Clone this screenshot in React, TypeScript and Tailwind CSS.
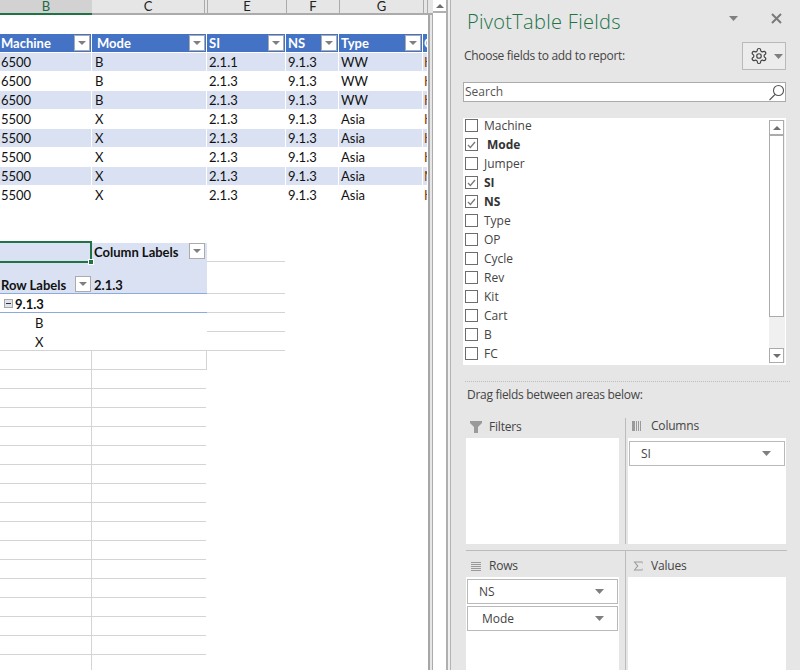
function Arrow({ className = "" }: { className?: string }) {
  return (
    <svg width="9" height="5" viewBox="0 0 9 5" className={className}>
      <path d="M0 0H9L4.5 5Z" fill="#7f7f7f" />
    </svg>
  );
}

function FilterBtn({ className = "" }: { className?: string }) {
  return (
    <div className={`w-[16px] h-[16px] bg-white border border-[#ababab] flex items-center justify-center shrink-0 ${className}`}>
      <svg width="8" height="4" viewBox="0 0 8 4"><path d="M0 0H8L4 4Z" fill="#7f7f7f" /></svg>
    </div>
  );
}

const colsW = [92, 115, 79, 53, 84, 5];
const headPad = [1, 5, 2, 2, 2, 1];
const dataPad = [1, 3, 2, 2, 2, 1];
const heads = ["Machine", "Mode", "SI", "NS", "Type", "C"];
const rows = [
  ["6500", "B", "2.1.1", "9.1.3", "WW", "K"],
  ["6500", "B", "2.1.3", "9.1.3", "WW", "K"],
  ["6500", "B", "2.1.3", "9.1.3", "WW", "K"],
  ["5500", "X", "2.1.3", "9.1.3", "Asia", "K"],
  ["5500", "X", "2.1.3", "9.1.3", "Asia", "K"],
  ["5500", "X", "2.1.3", "9.1.3", "Asia", "K"],
  ["5500", "X", "2.1.3", "9.1.3", "Asia", "M"],
  ["5500", "X", "2.1.3", "9.1.3", "Asia", "K"],
];

function ColHeaders() {
  const c = [
    ["B", 92, true],
    ["C", 113, false],
    ["", 3, false],
    ["E", 79, false],
    ["F", 53, false],
    ["G", 84, false],
    ["", 4, false],
  ] as const;
  return (
    <div className="h-[15px] flex bg-[#e6e6e6] shrink-0">
      {c.map(([l, w, sel], i) => (
        <div
          key={i}
          style={{ width: w }}
          className={`h-full flex items-center justify-center text-[13px] leading-none ${sel ? "bg-[#d2d2d2] text-[#1e6b41] border-b-2 border-[#217346]" : "text-[#222] border-r border-b-2 border-[#ababab]"}`}
        >
          {l}
        </div>
      ))}
      <div className="flex-1 border-b-2 border-[#ababab]" />
    </div>
  );
}

function DataTable() {
  return (
    <div className="mt-[19px]">
      <div className="flex h-[19px]">
        {heads.map((h, i) => (
          <div
            key={i}
            style={{ width: colsW[i], paddingLeft: headPad[i] }}
            className="h-[18px] bg-[#4472c4] text-white font-bold text-[13px] leading-[18px] border-r border-white flex items-center justify-between pr-[1px] overflow-hidden shrink-0"
          >
            <span>{h}</span>
            {i < 5 && <FilterBtn />}
          </div>
        ))}
      </div>
      {rows.map((r, ri) => (
        <div key={ri} className="flex h-[19px]">
          {r.map((c, i) => (
            <div
              key={i}
              style={{ width: colsW[i], paddingLeft: dataPad[i] }}
              className={`h-[18px] text-[13px] leading-[18px] border-r border-white overflow-hidden shrink-0 ${ri % 2 === 0 ? "bg-[#d9e1f2]" : "bg-white"} ${i === 5 ? "text-[#833c0b]" : "text-[#111]"}`}
            >
              {c}
            </div>
          ))}
        </div>
      ))}
    </div>
  );
}

function Pivot() {
  return (
    <div className="mt-[36px] text-[13px] text-[#111]">
      <div className="h-[21px] flex">
        <div className="w-[92px] h-[22px] bg-[#d9e1f2] border-2 border-l-0 border-[#217346] shrink-0 relative z-10">
          <div className="absolute right-[-4px] bottom-[-4px] w-[6px] h-[6px] bg-[#217346] border border-white" />
        </div>
        <div className="w-[115px] h-[19px] mt-[2px] bg-[#d9e1f2] flex items-start justify-between pl-[2px] pr-[2px] font-bold shrink-0">
          <span className="leading-[18px]">Column Labels</span>
          <FilterBtn />
        </div>
        <div className="w-[78px] h-[21px] border-b border-[#d4d4d4] shrink-0" />
      </div>
      <div className="h-[32px] flex">
        <div className="w-[92px] bg-[#d9e1f2] flex items-end justify-between pl-[1px] pr-[1px] font-bold border-b border-[#8ea9db] shrink-0">
          <span className="leading-[16px]">Row Labels</span>
          <FilterBtn className="mb-[1px]" />
        </div>
        <div className="w-[115px] bg-[#d9e1f2] flex items-end pl-[2px] font-bold border-b border-[#8ea9db] shrink-0">
          <span className="leading-[16px]">2.1.3</span>
        </div>
        <div className="w-[78px] border-b border-[#d4d4d4] shrink-0" />
      </div>
      <div className="h-[19px] flex">
        <div className="w-[207px] border-b border-[#8ea9db] flex items-center font-bold pl-[4px] shrink-0">
          <div className="w-[9px] h-[9px] bg-[#dfe3ee] border border-[#a6a6a6] flex items-center justify-center mr-[2px]">
            <div className="w-[5px] h-px bg-[#333]" />
          </div>
          <span className="leading-[18px] pt-[1px]">9.1.3</span>
        </div>
        <div className="w-[78px] border-b border-[#d4d4d4] shrink-0" />
      </div>
      <div className="h-[19px] flex">
        <div className="w-[207px] pl-[35px] leading-[20px] shrink-0">B</div>
        <div className="w-[78px] border-b border-[#d4d4d4] shrink-0" />
      </div>
      <div className="h-[19px] flex">
        <div className="w-[207px] pl-[35px] leading-[20px] border-b border-[#d4d4d4] shrink-0">X</div>
        <div className="w-[78px] border-b border-[#d4d4d4] shrink-0" />
      </div>
      {Array.from({ length: 17 }).map((_, i) => (
        <div key={i} className="h-[19px] flex">
          <div className="w-[92px] border-r border-b border-[#d4d4d4] shrink-0" />
          <div className="w-[114px] border-b border-[#d4d4d4] shrink-0" />
          {i === 0 && <div className="w-px bg-[#d4d4d4] shrink-0" />}
        </div>
      ))}
    </div>
  );
}

function Check({ on }: { on?: boolean }) {
  return (
    <div className="w-[13px] h-[13px] border border-[#6d6d6d] bg-white flex items-center justify-center shrink-0">
      {on && (
        <svg width="9" height="8" viewBox="0 0 9 8">
          <path d="M1 4L3.4 6.5L8 1" fill="none" stroke="#7a7a7a" strokeWidth="1.3" />
        </svg>
      )}
    </div>
  );
}

const fields: [string, boolean, string?][] = [
  ["Machine", false],
  ["Mode", true, "pl-[3px]"],
  ["Jumper", false],
  ["SI", true],
  ["NS", true],
  ["Type", false],
  ["OP", false],
  ["Cycle", false],
  ["Rev", false],
  ["Kit", false],
  ["Cart", false],
  ["B", false],
  ["FC", false],
];

function FieldBox({ label, cls = "" }: { label: string; cls?: string }) {
  return (
    <div className="h-[25px] border border-[#b9b9b9] bg-white flex items-center justify-between pr-[13px] mb-[2px] text-[12px] text-[#444]">
      <span className={cls}>{label}</span>
      <Arrow />
    </div>
  );
}

function ScrollBtn({ up }: { up?: boolean }) {
  return (
    <div className="w-[15px] h-[15px] border border-[#ababab] bg-white flex items-center justify-center shrink-0">
      <svg width="8" height="4" viewBox="0 0 8 4">
        <path d={up ? "M0 4H8L4 0Z" : "M0 0H8L4 4Z"} fill="#6f6f6f" />
      </svg>
    </div>
  );
}

function Panel() {
  return (
    <div className="w-[350px] h-[670px] bg-[#e6e6e6] border-l border-[#b3b3b3] shrink-0 overflow-hidden text-[#444] font-['Open_Sans',sans-serif]">
      <div className="h-[42px] flex items-start">
        <div className="ml-[16px] mt-[8px] text-[20px] leading-[28px] font-light tracking-[0.3px] text-[#217346] w-[260px] whitespace-nowrap">PivotTable Fields</div>
        <Arrow className="mt-[16px] ml-[2px]" />
        <svg width="11" height="11" viewBox="0 0 11 11" className="mt-[13px] ml-[33px]">
          <path d="M1 1L10 10M10 1L1 10" stroke="#7a7a7a" strokeWidth="2" />
        </svg>
      </div>
      <div className="h-[28px] flex items-center justify-between pl-[13px] pr-[14px]">
        <span className="text-[12px] tracking-[-0.3px] whitespace-nowrap">Choose fields to add to report:</span>
        <div className="w-[44px] h-[28px] border border-[#b9b9b9] bg-[#ececec] flex items-center pl-[7px] gap-[6px]">
          <svg width="18" height="18" viewBox="0 0 24 24" fill="none" stroke="#444" strokeWidth="1.6" strokeLinejoin="round">
            <path d="M12.2 2h-.44a2 2 0 0 0-2 2v.18a2 2 0 0 1-1 1.73l-.43.25a2 2 0 0 1-2 0l-.15-.08a2 2 0 0 0-2.73.73l-.22.38a2 2 0 0 0 .73 2.73l.15.1a2 2 0 0 1 1 1.72v.51a2 2 0 0 1-1 1.74l-.15.09a2 2 0 0 0-.73 2.73l.22.38a2 2 0 0 0 2.73.73l.15-.08a2 2 0 0 1 2 0l.43.25a2 2 0 0 1 1 1.73V20a2 2 0 0 0 2 2h.44a2 2 0 0 0 2-2v-.18a2 2 0 0 1 1-1.73l.43-.25a2 2 0 0 1 2 0l.15.08a2 2 0 0 0 2.73-.73l.22-.39a2 2 0 0 0-.73-2.73l-.15-.08a2 2 0 0 1-1-1.74v-.5a2 2 0 0 1 1-1.74l.15-.09a2 2 0 0 0 .73-2.73l-.22-.38a2 2 0 0 0-2.73-.73l-.15.08a2 2 0 0 1-2 0l-.43-.25a2 2 0 0 1-1-1.73V4a2 2 0 0 0-2-2z" />
            <circle cx="12" cy="12" r="3" />
          </svg>
          <Arrow />
        </div>
      </div>
      <div className="mt-[12px] ml-[12px] w-[323px] h-[20px] border border-[#ababab] bg-white flex items-center justify-between pl-[1px] text-[12px]">
        <span className="text-[#555]">Search</span>
        <svg width="17" height="17" viewBox="0 0 17 17" fill="none" stroke="#555" strokeWidth="1.1">
          <circle cx="10.5" cy="6.5" r="5" />
          <path d="M7 10.5L1.5 16" />
        </svg>
      </div>
      <div className="mt-[16px] ml-[12px] w-[323px] h-[247px] bg-white flex justify-between overflow-hidden">
        <div className="pl-[2px] -mt-[2px]">
          {fields.map(([n, on, cls]) => (
            <div key={n} className="h-[19px] flex items-center gap-[6px] text-[12px] leading-none">
              <Check on={on} />
              <span className={`${on ? "font-bold text-[#333]" : "text-[#444]"} ${cls ?? ""}`}>{n}</span>
            </div>
          ))}
        </div>
        <div className="w-[16px] mr-[1px] mt-[2px] flex flex-col h-[243px] bg-[#f0f0f0]">
          <ScrollBtn up />
          <div className="w-[15px] h-[182px] bg-white border border-[#ababab]" />
          <div className="flex-1" />
          <ScrollBtn />
        </div>
      </div>
      <div className="mt-[16px] ml-[14px] w-[325px] border-t border-dotted border-[#bdbdbd]" />
      <div className="ml-[16px] mt-[3px] h-[20px] text-[12px] tracking-[-0.3px] leading-[20px]">Drag fields between areas below:</div>
      <div className="mt-[9px] ml-[15px] grid grid-cols-[159px_1fr] w-[321px]">
        <div className="pr-[6px]">
          <div className="h-[24px] flex items-center gap-[7px] text-[12px] tracking-[-0.2px] pl-[4px] pt-[2px]">
            <svg width="12" height="12" viewBox="0 0 12 12"><path d="M0 0H12V2L8 6V12H4V6L0 2Z" fill="#9a9a9a" /></svg>
            <span>Filters</span>
          </div>
          <div className="h-[106px] bg-white w-[153px]" />
        </div>
        <div className="border-l border-[#bcbcbd] pl-[2px] mt-[4px]">
          <div className="h-[20px] flex items-center gap-[9px] text-[12px] tracking-[-0.2px] pl-[4px] pb-[4px]">
            <svg width="10" height="10" viewBox="0 0 10 10"><path d="M0 0H3V10H0ZM4 0H5V10H4ZM6 0H7V10H6ZM8 0H9V10H8Z" fill="#9a9a9a" /></svg>
            <span>Columns</span>
          </div>
          <div className="h-[106px] bg-white w-[158px] pt-[3px] px-[1px]">
            <FieldBox label="SI" cls="pl-[11px]" />
          </div>
        </div>
        <div className="pr-[6px] border-t border-[#bcbcbd] mt-[6px] col-start-1">
          <div className="h-[26px] flex items-center gap-[8px] text-[12px] tracking-[-0.2px] pl-[5px] pt-[4px]">
            <svg width="10" height="9" viewBox="0 0 10 9"><path d="M0 0H10V1H0ZM0 2H10V3H0ZM0 4H10V5H0ZM0 6H10V7H0ZM0 8H10V9H0Z" fill="#9a9a9a" /></svg>
            <span>Rows</span>
          </div>
          <div className="h-[100px] bg-white w-[153px] pt-[2px] pl-[1px] pr-[1px]">
            <FieldBox label="NS" cls="pl-[11px]" />
            <FieldBox label="Mode" cls="pl-[14px]" />
          </div>
        </div>
        <div className="border-l border-t border-[#bcbcbd] pl-[2px] mt-[6px]">
          <div className="h-[26px] flex items-center gap-[8px] text-[12px] tracking-[-0.2px] pl-[5px] pt-[4px]">
            <svg width="10" height="10" viewBox="0 0 10 10"><path d="M0.5 0.5H9.5V3L8.7 1.5H2.5L5.5 5L2.3 8.5H8.7L9.5 7V9.5H0.5L4 5Z" fill="#9a9a9a" /></svg>
            <span>Values</span>
          </div>
          <div className="h-[100px] bg-white w-[158px]" />
        </div>
      </div>
    </div>
  );
}

export default function App() {
  return (
    <div className="w-[800px] h-[670px] overflow-hidden flex bg-white font-['Lato',sans-serif]">
      <div className="w-[433px] h-[670px] flex flex-col shrink-0">
        <ColHeaders />
        <div className="flex flex-1 min-h-0">
          <div className="w-[430px] h-full overflow-hidden border-r-2 border-[#a6a6a6] shrink-0">
            <DataTable />
            <Pivot />
          </div>
          <div className="flex-1 bg-[#e6e6e6] border-r border-[#ababab]" />
        </div>
      </div>
      <div className="w-[15px] h-[670px] bg-white border-r-2 border-[#b0b0b0] shrink-0">
        <div className="h-[13px] border-b-2 border-[#b0b0b0] flex items-center justify-center">
          <svg width="8" height="4" viewBox="0 0 8 4"><path d="M0 4H8L4 0Z" fill="#6f6f6f" /></svg>
        </div>
      </div>
      <div className="w-[2px] h-[670px] bg-[#f0f0f0] shrink-0" />
      <Panel />
    </div>
  );
}
